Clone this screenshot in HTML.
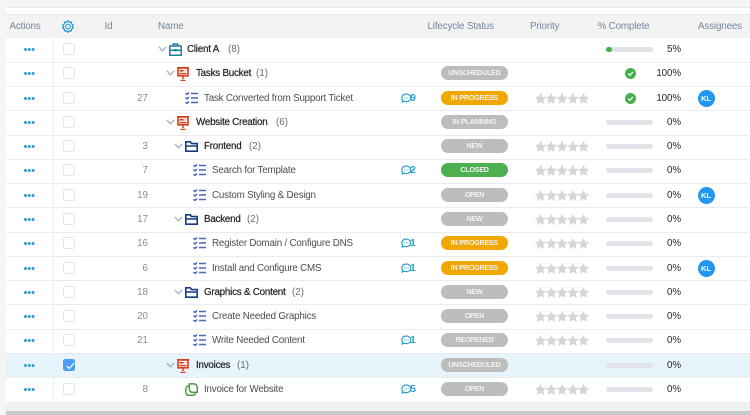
<!DOCTYPE html>
<html><head><meta charset="utf-8">
<style>
html,body{margin:0;padding:0;background:#f5f5f5}
body{width:750px;height:415px;overflow:hidden;position:relative;font-family:"Liberation Sans",sans-serif;font-size:9.8px;letter-spacing:-.2px;color:#3d4046}
.top{position:absolute;left:6px;right:0;top:7px;height:7px;background:#fff;border-top:1px solid #ececec;box-sizing:border-box}
.hd{position:absolute;left:6px;right:0;top:14px;height:24px;background:#f3f3f4;border-top:1px solid #e8e8e8;box-sizing:border-box}
.h{position:absolute;top:20.5px;color:#74869e;font-size:9.8px;letter-spacing:-.14px;line-height:12px;white-space:nowrap}
.wb{position:absolute;left:6px;right:0;top:38px;height:364px;background:#fff}
.foot{position:absolute;left:6px;right:0;top:402px;height:9px;background:#eef1f3}
.bar{position:absolute;left:6px;right:0;top:411px;height:4px;background:#c6cacc}
.vl{position:absolute;left:53px;top:14px;width:1px;height:388px;background:#eceef0}
.r{position:absolute;left:6px;right:0;border-bottom:1px solid #e9ecef;box-sizing:border-box}
.r.s{background:#e8f4fb}
.r>*{position:absolute}
.dots{left:18px;top:9.5px;width:11px;height:3px;background:radial-gradient(circle at 1.5px 1.5px,#2a9fd0 1.4px,transparent 1.6px) 0 0/3.8px 3px repeat-x}
.c{left:57px;top:5px;width:12px;height:12px;border:1px solid #e3e5e8;border-radius:2.5px;background:#fff;box-sizing:border-box}
.c.on{background:#4a9cf5;border-color:#4a9cf5}
.id{left:100px;width:42px;text-align:right;top:6px;line-height:12px;color:#8a8d92;letter-spacing:0}
.t{top:6px;line-height:12px;white-space:nowrap;color:#4a4d52}
.b{color:#1c1e22;-webkit-text-stroke:.2px #1c1e22;letter-spacing:-.22px}
.n{top:6px;line-height:12px;color:#6a6d72;letter-spacing:0}
.p{left:435px;top:4px;width:67px;height:14px;border-radius:7px;background:#bdbdbd;color:#f3f3f3;font-size:7.2px;letter-spacing:-.25px;line-height:14px;text-align:center;white-space:nowrap;font-weight:bold}
.p.o{background:#f0a800}.p.g{background:#4caf50}
.st{left:529px;top:5.5px}
.pr{left:600px;top:8.5px;width:47px;height:5px;border-radius:3px;background:#e0e3e8}
.pc{left:640px;width:35px;text-align:right;top:6px;line-height:12px;color:#26282c;letter-spacing:-.1px}
.ck{left:619px;top:5.5px}
.kl{left:691.5px;top:2.5px;width:17px;height:17px;border-radius:50%;background:#2196f3;color:#fff;font-size:7.5px;letter-spacing:0;font-weight:bold;line-height:17px;text-align:center}
.cm{left:395px;top:6px}
.cn{left:404px;top:5px;line-height:13px;font-size:10.5px;font-weight:bold;letter-spacing:0;color:#2a9fd0}
</style></head><body>
<svg width="0" height="0" style="position:absolute">
<defs>
<symbol id="chev" viewBox="0 0 9 6"><path d="M.8.8 4.5 4.8 8.2.8" fill="none" stroke="#a9b4c0" stroke-width="1.4"/></symbol>
<symbol id="case" viewBox="0 0 13 13"><path d="M4.3 3V1h4.400v2M.8 3h11.400v9.200H.8zM.8 7.200h11.400" fill="none" stroke="#1b7fa6" stroke-width="1.500"/><rect x="5.200" y="6" width="2.600" height="2.400" fill="#1b7fa6"/></symbol>
<symbol id="pres" viewBox="0 0 12 14"><path d="M1 1h10v7.800H1z" fill="#fbe3dc" stroke="#d2401f" stroke-width="1.600"/><path d="M0 .6h12M6 9v3M3.500 13.500h5" fill="none" stroke="#d2401f" stroke-width="1.500"/><path d="M2.500 3h4v1.500h-4zM2.500 6h7v1.200h-7z" fill="#d2401f"/></symbol>
<symbol id="fold" viewBox="0 0 13 11"><path d="M.8.8h4.500l1.200 1.800h5.700v7.600H.8zM.8 5h11.400" fill="none" stroke="#123f85" stroke-width="1.600"/></symbol>
<symbol id="list" viewBox="0 0 13 12"><path d="M6 1.500h7M6 6h7M6 10.500h7" stroke="#4a66c0" stroke-width="1.600"/><path d="M.5 1.200 2 2.500 4 .5M.5 5.700 2 7 4 5M.5 10.200 2 11.500 4 9.500" fill="none" stroke="#4a66c0" stroke-width="1.500"/></symbol>
<symbol id="inv" viewBox="0 0 13 13"><path d="M4.300 2.500A4.200 4.200 0 0 0 .8 6.500v2.800a3 3 0 0 0 3 3h3.700a3.500 3.500 0 0 0 3-2" fill="none" stroke="#4a9e3f" stroke-width="1.500"/><path d="M4.300.9h4.500a3.500 3.500 0 0 1 3.500 3.500v5H7.500a3.200 3.200 0 0 1-3.200-3.200z" fill="none" stroke="#4a9e3f" stroke-width="1.500"/></symbol>
<symbol id="com" viewBox="0 0 13 11"><path d="M6.300.8C9.300.8 11.500 2.800 11.500 5.300c0 2.600-2.200 4.500-5.200 4.500-.9 0-1.700-.1-2.400-.4L1.500 10.300l.5-2.200C1.200 7.300.9 6.400.9 5.300.9 2.800 3.300.8 6.300.8z" fill="none" stroke="#2a9fd0" stroke-width="1.400"/><path d="M3.800 5.300h1M5.800 5.300h1M7.800 5.300h1" stroke="#2a9fd0" stroke-width="1.100"/></symbol>
<symbol id="stars" viewBox="0 0 54 11"><g fill="#d6d6d6" stroke="#d6d6d6" stroke-width=".4" stroke-linejoin="round"><path d="M5.500.3l1.600 3.400 3.700.5-2.700 2.600.7 3.700-3.300-1.800-3.300 1.800.7-3.700L.2 4.200l3.700-.5z"/><path d="M16.300.3l1.600 3.400 3.700.5-2.700 2.600.7 3.700-3.300-1.800-3.300 1.800.7-3.700-2.700-2.600 3.700-.5z"/><path d="M27.100.3l1.600 3.400 3.700.5-2.700 2.600.7 3.700-3.300-1.800-3.300 1.800.7-3.700-2.700-2.600 3.700-.5z"/><path d="M37.900.3l1.600 3.400 3.700.5-2.700 2.600.7 3.700-3.300-1.800-3.300 1.800.7-3.700-2.700-2.600 3.700-.5z"/><path d="M48.500.3l1.600 3.400 3.700.5-2.700 2.600.7 3.700-3.300-1.800-3.300 1.800.7-3.700-2.700-2.600 3.700-.5z"/></g></symbol>
<symbol id="chk" viewBox="0 0 11 11"><circle cx="5.500" cy="5.500" r="5.500" fill="#43b14b"/><path d="M3.200 5.600 4.900 7.300 7.900 3.900" fill="none" stroke="#fff" stroke-width="1.300"/></symbol>
</defs></svg>

<div class="top"></div>
<div class="hd"></div>
<div class="wb"></div>
<span class="h" style="left:9.5px">Actions</span>
<svg style="position:absolute;left:62px;top:20px" width="12" height="13" viewBox="0 0 12 13"><path d="M6 .8 7.300 2.200 9.200 2 9.700 3.900 11.300 5 10.500 6.500 11.300 8 9.700 9.100 9.200 11 7.300 10.800 6 12.200 4.700 10.800 2.800 11 2.300 9.100.7 8 1.500 6.500.7 5 2.300 3.900 2.800 2 4.700 2.200z" fill="none" stroke="#2a9fd0" stroke-width="1.300"/><circle cx="6" cy="6.500" r="2.300" fill="none" stroke="#2a9fd0" stroke-width="1.200"/></svg>
<span class="h" style="left:104.5px">Id</span>
<span class="h" style="left:158px">Name</span>
<span class="h" style="left:427.5px">Lifecycle Status</span>
<span class="h" style="left:530px">Priority</span>
<span class="h" style="left:597.5px">% Complete</span>
<span class="h" style="left:698px">Assignees</span>

<div class="r" style="top:38px;height:25px"><i class="dots"></i><i class="c"></i><svg style="left:152px;top:8px" width="9" height="6"><use href="#chev"/></svg><svg style="left:163px;top:4.500px" width="13" height="13"><use href="#case"/></svg><span class="t b" style="left:181px">Client A</span><span class="n" style="left:222px">(8)</span><i class="pr"></i><i class="pr" style="width:6px;background:#3fb34a"></i><span class="pc">5%</span></div>

<div class="r" style="top:62px;height:25px"><i class="dots"></i><i class="c"></i><svg style="left:160px;top:8px" width="9" height="6"><use href="#chev"/></svg><svg style="left:171px;top:4.500px" width="12" height="14"><use href="#pres"/></svg><span class="t b" style="left:190px">Tasks Bucket</span><span class="n" style="left:250px">(1)</span><span class="p">UNSCHEDULED</span><svg class="ck" width="11" height="11"><use href="#chk"/></svg><span class="pc">100%</span></div>

<div class="r" style="top:87px;height:24px"><i class="dots"></i><i class="c"></i><span class="id">27</span><svg style="left:179px;top:5px" width="13" height="12"><use href="#list"/></svg><span class="t" style="left:198px">Task Converted from Support Ticket</span><svg class="cm" width="11" height="10"><use href="#com"/></svg><span class="cn">9</span><span class="p o">IN PROGRESS</span><svg class="st" width="54" height="11"><use href="#stars"/></svg><svg class="ck" width="11" height="11"><use href="#chk"/></svg><span class="pc">100%</span><span class="kl">KL</span></div>

<div class="r" style="top:111px;height:25px"><i class="dots"></i><i class="c"></i><svg style="left:160px;top:8px" width="9" height="6"><use href="#chev"/></svg><svg style="left:171px;top:4.500px" width="12" height="14"><use href="#pres"/></svg><span class="t b" style="left:190px">Website Creation</span><span class="n" style="left:270px">(6)</span><span class="p">IN PLANNING</span><i class="pr"></i><span class="pc">0%</span></div>

<div class="r" style="top:135px;height:25px"><i class="dots"></i><i class="c"></i><span class="id">3</span><svg style="left:168px;top:8px" width="9" height="6"><use href="#chev"/></svg><svg style="left:179px;top:5.500px" width="13" height="11"><use href="#fold"/></svg><span class="t b" style="left:198px">Frontend</span><span class="n" style="left:243px">(2)</span><span class="p">NEW</span><svg class="st" width="54" height="11"><use href="#stars"/></svg><i class="pr"></i><span class="pc">0%</span></div>

<div class="r" style="top:159px;height:25px"><i class="dots"></i><i class="c"></i><span class="id">7</span><svg style="left:187px;top:5px" width="13" height="12"><use href="#list"/></svg><span class="t" style="left:206px">Search for Template</span><svg class="cm" width="11" height="10"><use href="#com"/></svg><span class="cn">2</span><span class="p g">CLOSED</span><svg class="st" width="54" height="11"><use href="#stars"/></svg><i class="pr"></i><span class="pc">0%</span></div>

<div class="r" style="top:184px;height:24px"><i class="dots"></i><i class="c"></i><span class="id">19</span><svg style="left:187px;top:5px" width="13" height="12"><use href="#list"/></svg><span class="t" style="left:206px">Custom Styling &amp; Design</span><span class="p">OPEN</span><svg class="st" width="54" height="11"><use href="#stars"/></svg><i class="pr"></i><span class="pc">0%</span><span class="kl">KL</span></div>

<div class="r" style="top:208px;height:25px"><i class="dots"></i><i class="c"></i><span class="id">17</span><svg style="left:168px;top:8px" width="9" height="6"><use href="#chev"/></svg><svg style="left:179px;top:5.500px" width="13" height="11"><use href="#fold"/></svg><span class="t b" style="left:198px">Backend</span><span class="n" style="left:241px">(2)</span><span class="p">NEW</span><svg class="st" width="54" height="11"><use href="#stars"/></svg><i class="pr"></i><span class="pc">0%</span></div>

<div class="r" style="top:232px;height:25px"><i class="dots"></i><i class="c"></i><span class="id">16</span><svg style="left:187px;top:5px" width="13" height="12"><use href="#list"/></svg><span class="t" style="left:206px">Register Domain / Configure DNS</span><svg class="cm" width="11" height="10"><use href="#com"/></svg><span class="cn">1</span><span class="p o">IN PROGRESS</span><svg class="st" width="54" height="11"><use href="#stars"/></svg><i class="pr"></i><span class="pc">0%</span></div>

<div class="r" style="top:257px;height:24px"><i class="dots"></i><i class="c"></i><span class="id">6</span><svg style="left:187px;top:5px" width="13" height="12"><use href="#list"/></svg><span class="t" style="left:206px">Install and Configure CMS</span><svg class="cm" width="11" height="10"><use href="#com"/></svg><span class="cn">1</span><span class="p o">IN PROGRESS</span><svg class="st" width="54" height="11"><use href="#stars"/></svg><i class="pr"></i><span class="pc">0%</span><span class="kl">KL</span></div>

<div class="r" style="top:281px;height:24px"><i class="dots"></i><i class="c"></i><span class="id">18</span><svg style="left:168px;top:8px" width="9" height="6"><use href="#chev"/></svg><svg style="left:179px;top:5.500px" width="13" height="11"><use href="#fold"/></svg><span class="t b" style="left:198px">Graphics &amp; Content</span><span class="n" style="left:286px">(2)</span><span class="p">NEW</span><svg class="st" width="54" height="11"><use href="#stars"/></svg><i class="pr"></i><span class="pc">0%</span></div>

<div class="r" style="top:305px;height:25px"><i class="dots"></i><i class="c"></i><span class="id">20</span><svg style="left:187px;top:5px" width="13" height="12"><use href="#list"/></svg><span class="t" style="left:206px">Create Needed Graphics</span><span class="p">OPEN</span><svg class="st" width="54" height="11"><use href="#stars"/></svg><i class="pr"></i><span class="pc">0%</span></div>

<div class="r" style="top:329px;height:25px"><i class="dots"></i><i class="c"></i><span class="id">21</span><svg style="left:187px;top:5px" width="13" height="12"><use href="#list"/></svg><span class="t" style="left:206px">Write Needed Content</span><svg class="cm" width="11" height="10"><use href="#com"/></svg><span class="cn">1</span><span class="p">REOPENED</span><svg class="st" width="54" height="11"><use href="#stars"/></svg><i class="pr"></i><span class="pc">0%</span></div>

<div class="r s" style="top:354px;height:24px"><i class="dots"></i><i class="c on"><svg style="position:absolute;left:1.500px;top:2px" width="9" height="8" viewBox="0 0 9 8"><path d="M.8 4 3.300 6.500 8.200 1" fill="none" stroke="#fff" stroke-width="1.200"/></svg></i><svg style="left:160px;top:8px" width="9" height="6"><use href="#chev"/></svg><svg style="left:171px;top:4.500px" width="12" height="14"><use href="#pres"/></svg><span class="t b" style="left:190px">Invoices</span><span class="n" style="left:231px">(1)</span><span class="p">UNSCHEDULED</span><i class="pr"></i><span class="pc">0%</span></div>

<div class="r" style="top:378px;height:24px;border-bottom:0"><i class="dots"></i><i class="c"></i><span class="id">8</span><svg style="left:179px;top:4.500px" width="13" height="13"><use href="#inv"/></svg><span class="t" style="left:198px">Invoice for Website</span><svg class="cm" width="11" height="10"><use href="#com"/></svg><span class="cn">5</span><span class="p">OPEN</span><svg class="st" width="54" height="11"><use href="#stars"/></svg><i class="pr"></i><span class="pc">0%</span></div>

<div class="vl"></div>
<div class="foot"></div>
<div class="bar"></div>
</body></html>
